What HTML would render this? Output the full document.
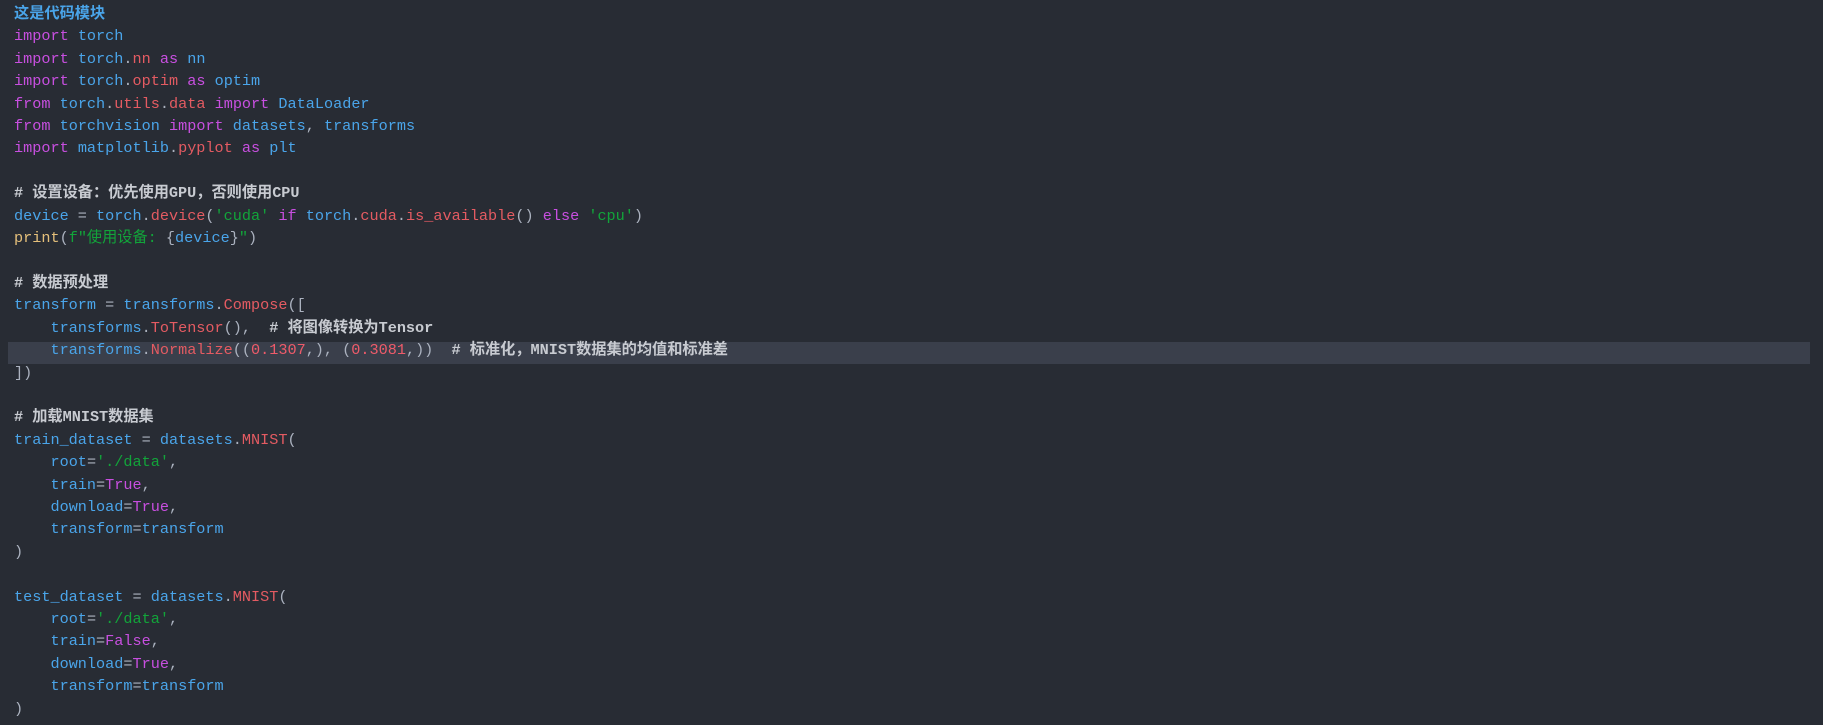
<!DOCTYPE html>
<html><head><meta charset="utf-8"><style>
html,body{margin:0;padding:0;background:#282c34;width:1823px;height:725px;overflow:hidden}
pre{margin:0;position:absolute;left:14px;top:3px;font-family:"Liberation Mono","Noto Sans CJK SC",monospace;font-size:15.2px;line-height:22.4px;color:#abb2bf}
.hl{position:absolute;left:8px;top:342px;width:1802px;height:22px;background:#3a3f4b}
.k{color:#c84fe0}.b{color:#4aa5ea}.r{color:#e45b62}.s{color:#12a43a}.y{color:#e5c07b}.c{color:#c8cbd1;font-weight:bold}.n{color:#ef5b6a}.t{color:#4aa5ea;font-weight:bold}
</style></head><body><div class="hl"></div><pre><span class="t">这是代码模块</span>
<span class="k">import</span> <span class="b">torch</span>
<span class="k">import</span> <span class="b">torch</span>.<span class="r">nn</span> <span class="k">as</span> <span class="b">nn</span>
<span class="k">import</span> <span class="b">torch</span>.<span class="r">optim</span> <span class="k">as</span> <span class="b">optim</span>
<span class="k">from</span> <span class="b">torch</span>.<span class="r">utils</span>.<span class="r">data</span> <span class="k">import</span> <span class="b">DataLoader</span>
<span class="k">from</span> <span class="b">torchvision</span> <span class="k">import</span> <span class="b">datasets</span>, <span class="b">transforms</span>
<span class="k">import</span> <span class="b">matplotlib</span>.<span class="r">pyplot</span> <span class="k">as</span> <span class="b">plt</span>

<span class="c"># 设置设备：优先使用GPU，否则使用CPU</span>
<span class="b">device</span> = <span class="b">torch</span>.<span class="r">device</span>(<span class="s">'cuda'</span> <span class="k">if</span> <span class="b">torch</span>.<span class="r">cuda</span>.<span class="r">is_available</span>() <span class="k">else</span> <span class="s">'cpu'</span>)
<span class="y">print</span>(<span class="s">f"使用设备: </span>{<span class="b">device</span>}<span class="s">"</span>)

<span class="c"># 数据预处理</span>
<span class="b">transform</span> = <span class="b">transforms</span>.<span class="r">Compose</span>([
    <span class="b">transforms</span>.<span class="r">ToTensor</span>(),  <span class="c"># 将图像转换为Tensor</span>
    <span class="b">transforms</span>.<span class="r">Normalize</span>((<span class="n">0.1307</span>,), (<span class="n">0.3081</span>,))  <span class="c"># 标准化，MNIST数据集的均值和标准差</span>
])

<span class="c"># 加载MNIST数据集</span>
<span class="b">train_dataset</span> = <span class="b">datasets</span>.<span class="r">MNIST</span>(
    <span class="b">root</span>=<span class="s">'./data'</span>,
    <span class="b">train</span>=<span class="k">True</span>,
    <span class="b">download</span>=<span class="k">True</span>,
    <span class="b">transform</span>=<span class="b">transform</span>
)

<span class="b">test_dataset</span> = <span class="b">datasets</span>.<span class="r">MNIST</span>(
    <span class="b">root</span>=<span class="s">'./data'</span>,
    <span class="b">train</span>=<span class="k">False</span>,
    <span class="b">download</span>=<span class="k">True</span>,
    <span class="b">transform</span>=<span class="b">transform</span>
)</pre></body></html>
